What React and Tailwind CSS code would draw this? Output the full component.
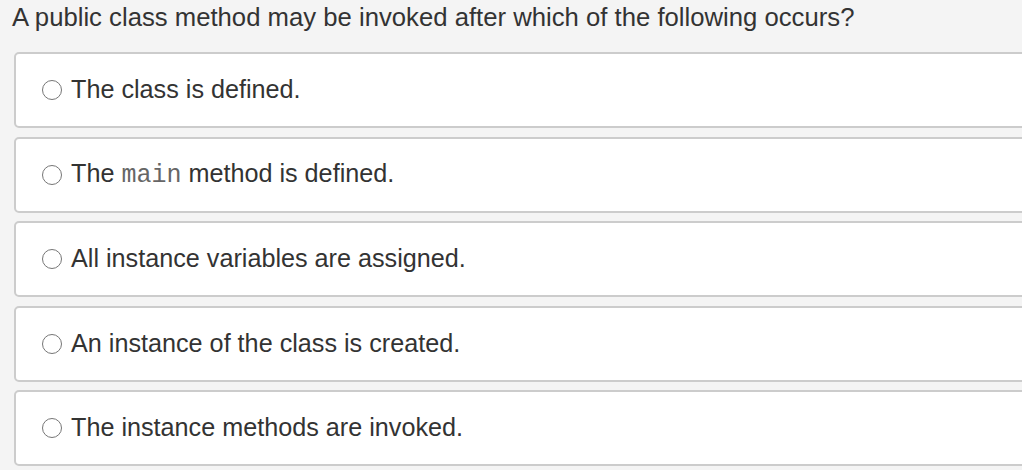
import React from 'react'

const options = [
    { id: 1, parts: ['The class is defined.'] },
    { id: 2, parts: ['The ', { code: 'main' }, ' method is defined.'] },
    { id: 3, parts: ['All instance variables are assigned.'] },
    { id: 4, parts: ['An instance of the class is created.'] },
    { id: 5, parts: ['The instance methods are invoked.'] },
]

const OptionCard = ({ option }) => {
    return (
        <label className="flex items-center h-[76px] border-2 border-[#cccccc] rounded-[5px] bg-white pl-[26px] -mr-[10px] cursor-pointer">
            <span className="w-[20px] h-[20px] rounded-full border-[1.5px] border-[#767676] bg-white shrink-0"></span>
            <span className="ml-[9px] text-[25.2px] text-[#333333] leading-none whitespace-pre">
                {option.parts.map((p, i) =>
                    typeof p === 'string'
                        ? <span key={i}>{p}</span>
                        : <code key={i} className="font-['Liberation_Mono',monospace] text-[25px] text-[#666666]">{p.code}</code>
                )}
            </span>
        </label>
    )
}

const App = () => {
    return (
        <div className="w-[1022px] h-[470px] overflow-hidden bg-[#f4f4f4] font-['Liberation_Sans',Arial,sans-serif]">
            <h1 className="pl-[12px] pt-[3px] text-[25.7px] text-[#333333] leading-[28px] whitespace-nowrap">
                A public class method may be invoked after which of the following occurs?
            </h1>
            <div className="flex flex-col gap-[8.5px] pl-[14px] mt-[21px]">
                {options.map((o) => <OptionCard key={o.id} option={o} />)}
            </div>
        </div>
    )
}

export default App
